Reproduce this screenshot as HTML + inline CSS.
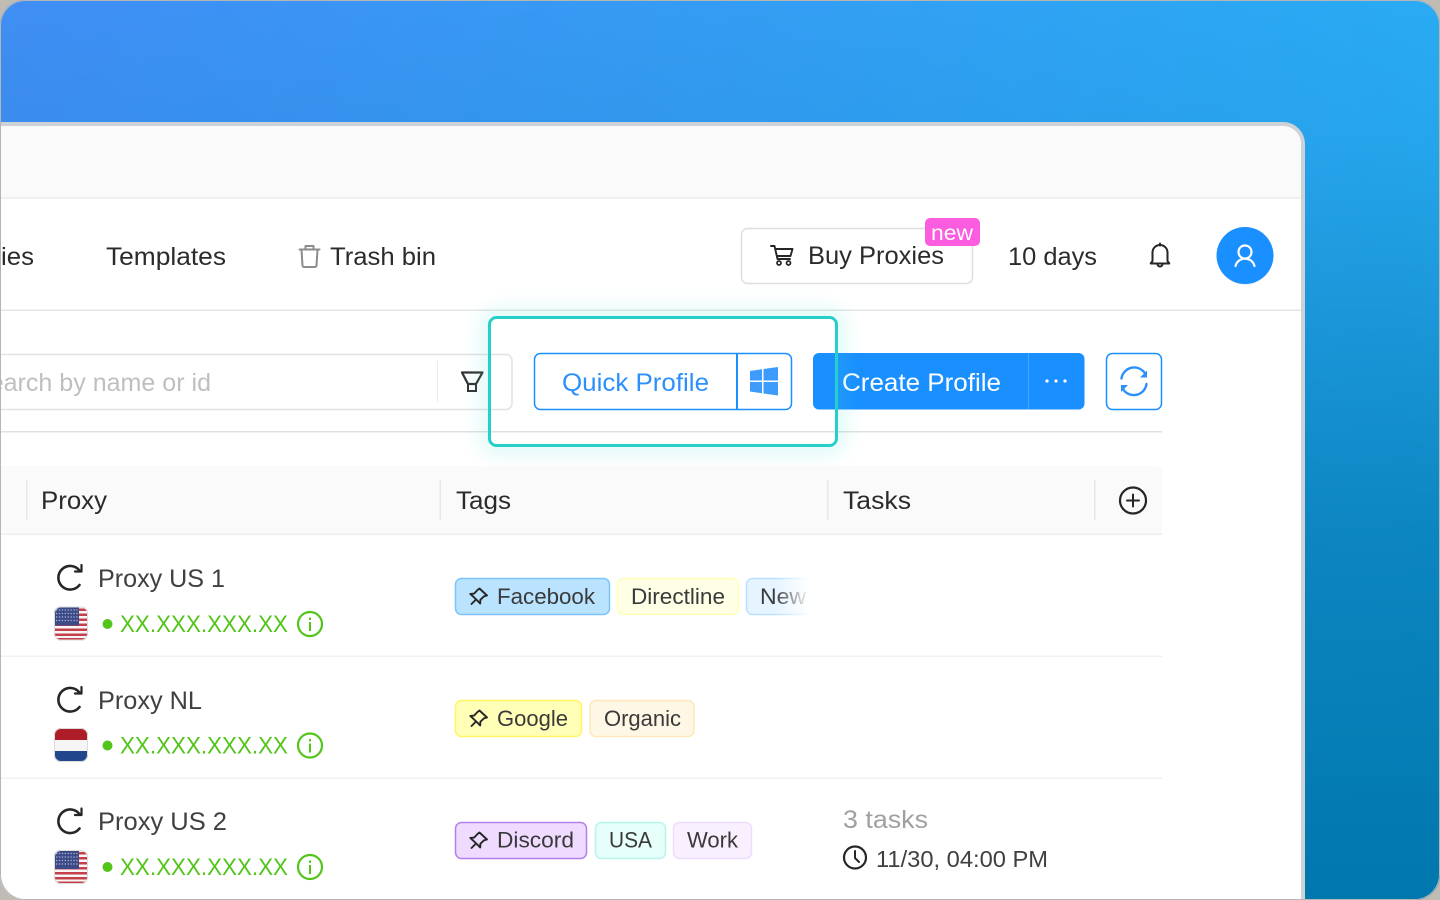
<!DOCTYPE html>
<html lang="en">
<head>
<meta charset="utf-8">
<title>Profiles</title>
<style>
html,body{margin:0;padding:0;background:#fff;width:1440px;height:900px;overflow:hidden}
svg{display:block}
text{font-family:"Liberation Sans",sans-serif;font-size:24px;fill:#2b2b2b}
.tag{font-size:22px;fill:#3a3a3a}
.ico{fill:none;stroke:#262626;stroke-width:2;stroke-linecap:round;stroke-linejoin:round}
.g{fill:#52c41a}
</style>
</head>
<body>
<svg width="1440" height="900" viewBox="0 0 1440 900" xmlns="http://www.w3.org/2000/svg">
<defs>
<linearGradient id="h" x1="0" y1="0" x2="1" y2="0"><stop offset="0" stop-color="#408ef4"/><stop offset="1" stop-color="#29abf3"/></linearGradient>
<linearGradient id="v" x1="0" y1="0" x2="0" y2="1"><stop offset="0" stop-color="#0077ad" stop-opacity="0"/><stop offset=".15" stop-color="#0077ad" stop-opacity=".1"/><stop offset=".6" stop-color="#0077ad" stop-opacity=".72"/><stop offset="1" stop-color="#0077ad"/></linearGradient>
<linearGradient id="fade" x1="0" y1="0" x2="1" y2="0"><stop offset="0" stop-color="#fff" stop-opacity="0"/><stop offset="1" stop-color="#fff"/></linearGradient>
<clipPath id="frame"><rect x="0" y="0" width="1440" height="900" rx="25"/></clipPath>
<clipPath id="outer"><path clip-rule="evenodd" d="M0 0H1440V900H0Z M489 317V446H837V317Z"/></clipPath>
<clipPath id="newclip"><rect x="740" y="570" width="70" height="50"/></clipPath>
<filter id="blur" x="-30%" y="-50%" width="160%" height="200%"><feGaussianBlur stdDeviation="10"/></filter>
<clipPath id="flag"><rect x="54" y="0" width="34" height="34" rx="7"/></clipPath>
<g id="spin"><path class="ico" style="stroke-width:2.600" d="M79.500 570.500A11.800 11.800 0 1 0 79.500 585"/><path class="ico" style="stroke-width:2.200" d="M81.500 565v6.500H75"/></g>
<g id="info"><circle cx="0" cy="0" r="12" fill="none" stroke="#52c41a" stroke-width="2.200"/><rect x="-1" y="-2" width="2" height="9" class="g"/><rect x="-1" y="-6.500" width="2" height="2.400" class="g"/></g>
<g id="pin"><path class="ico" style="stroke-width:1.900" d="M9.500 1.500l7.500 7-3 .8-3.600 3.400-.2 3.800-3.400-3.400-3.700-3.600-2.800-2.600 3.800-.3 3.400-3.600z M1.500 17l4.500-4.500"/></g>
<g id="us">
<g clip-path="url(#flag)">
<rect x="54" y="0" width="34" height="34" fill="#f6f6f6"/>
<rect x="54" y="2" width="34" height="2.500" fill="#c5404b"/><rect x="54" y="7" width="34" height="2.500" fill="#c5404b"/><rect x="54" y="12" width="34" height="2.500" fill="#c5404b"/><rect x="54" y="17" width="34" height="2.500" fill="#c5404b"/><rect x="54" y="22" width="34" height="2.500" fill="#c5404b"/><rect x="54" y="27" width="34" height="2.500" fill="#c5404b"/><rect x="54" y="31.500" width="34" height="2.500" fill="#c5404b"/>
<rect x="54" y="0" width="25" height="19" fill="#3c4a86"/>
<path d="M56 3.500H78M56 7H78M56 10.500H78M56 14H78" stroke="#aab4da" stroke-width="1.200" stroke-dasharray="1.300 1.600"/>
</g>
<rect x="54.500" y=".5" width="33" height="33" rx="6.500" fill="none" stroke="#dcdcdc"/>
</g>
</defs>

<rect width="1440" height="900" fill="#c0bcb4"/>
<g clip-path="url(#frame)">
<rect width="1440" height="900" fill="url(#h)"/>
<rect width="1440" height="900" fill="url(#v)"/>

<!-- window -->
<path d="M-4 122H1283a22 22 0 0 1 22 22V904H-4Z" fill="#cdd1d8"/>
<path d="M-4 126H1283a18 18 0 0 1 18 18V904H-4Z" fill="#fff"/>
<path d="M-4 126H1283a18 18 0 0 1 18 18V197H-4Z" fill="#fafafa"/>
<rect x="0" y="197" width="1301" height="2" fill="#f0f0f0"/>
<rect x="0" y="309.500" width="1301" height="1.500" fill="#e4e4e4"/>

<!-- nav -->
<text x="-52" y="265" textLength="86" lengthAdjust="spacingAndGlyphs" style="font-size:25px">Proxies</text>
<text x="106" y="265" textLength="120" lengthAdjust="spacingAndGlyphs" style="font-size:25px">Templates</text>
<path d="M299.500 249.500h20M305.500 249.500v-3.500h8v3.500M301.500 250l1 15.500a1.500 1.500 0 0 0 1.500 1.500h11a1.500 1.500 0 0 0 1.500-1.500l1-15.500" fill="none" stroke="#8c8c8c" stroke-width="2" stroke-linejoin="round" stroke-linecap="round"/>
<text x="330" y="265" textLength="106" lengthAdjust="spacingAndGlyphs" style="font-size:25px">Trash bin</text>

<rect x="741.500" y="228.500" width="231" height="55" rx="6" fill="#fff" stroke="#dedede" stroke-width="1.500"/>
<path class="ico" d="M771 246h3.500l3 13h12.500M776 249h16.500l-2 7h-13" style="stroke-width:1.900"/>
<circle cx="779" cy="263" r="2" fill="none" stroke="#262626" stroke-width="1.700"/><circle cx="788.500" cy="263" r="2" fill="none" stroke="#262626" stroke-width="1.700"/>
<text x="808" y="264" textLength="136" lengthAdjust="spacingAndGlyphs" style="font-size:25px">Buy Proxies</text>
<rect x="925" y="218" width="55" height="28" rx="5" fill="#fb5ce0"/>
<text x="931" y="240" textLength="42" lengthAdjust="spacingAndGlyphs" style="fill:#fff;font-size:21px">new</text>
<text x="1008" y="265" textLength="89" lengthAdjust="spacingAndGlyphs" style="font-size:25px">10 days</text>
<path class="ico" d="M1160 243.500v2M1160 245a7.500 7.500 0 0 0-7.500 7.500v8.500l-1.800 2.500h18.600l-1.800-2.500v-8.500a7.500 7.500 0 0 0-7.500-7.500zM1157.500 264a2.500 2.500 0 0 0 5 0" style="stroke-width:2"/>
<circle cx="1245" cy="257" r="28" fill="#000" opacity=".06"/>
<circle cx="1245" cy="255.500" r="28.500" fill="#1a8fff"/>
<circle cx="1245" cy="252" r="6.500" fill="none" stroke="#fff" stroke-width="2.200"/>
<path d="M1235.500 266a9.800 9.800 0 0 1 19 0" fill="none" stroke="#fff" stroke-width="2.200" stroke-linecap="round"/>

<!-- toolbar -->
<rect x="-10" y="354.500" width="522" height="55" rx="6" fill="#fff" stroke="#e2e2e2" stroke-width="1.500"/>
<text x="-27" y="391" textLength="238" lengthAdjust="spacingAndGlyphs" style="fill:#bfbfbf;font-size:25px">Search by name or id</text>
<rect x="437" y="361" width="1" height="41" fill="#ececec"/>
<path d="M462 372.500h20.500l-6.500 11.500h-8z" fill="none" stroke="#333" stroke-width="2.200" stroke-linejoin="round"/>
<rect x="468" y="384" width="8" height="7" fill="none" stroke="#333" stroke-width="2"/>
<rect x="0" y="431" width="1162" height="1.500" fill="#e0e0e0"/>

<rect x="534.500" y="353.500" width="257" height="56" rx="6" fill="#fff" stroke="#1a8fff" stroke-width="1.500"/>
<rect x="736" y="353.500" width="2" height="56" fill="#1a8fff"/>
<text x="562" y="391" textLength="147" lengthAdjust="spacingAndGlyphs" style="fill:#2b90fb;font-size:25px">Quick Profile</text>
<path d="M750 371l12-1.700v11.200h-12zM763.500 369l14.500-2v13.500h-14.500zM750 382h12v11.200l-12-1.700zM763.500 382H778v13.500l-14.500-2z" fill="#3d9bfb"/>

<rect x="813" y="353" width="271.500" height="56.500" rx="6" fill="#1a8fff"/>
<rect x="1028" y="353" width="1" height="56.500" fill="#4aa6ff"/>
<text x="842" y="391" textLength="159" lengthAdjust="spacingAndGlyphs" style="fill:#fff;font-size:25px">Create Profile</text>
<circle cx="1047" cy="381" r="1.600" fill="#fff"/><circle cx="1056" cy="381" r="1.600" fill="#fff"/><circle cx="1065" cy="381" r="1.600" fill="#fff"/>

<rect x="1106.500" y="353.500" width="55" height="56" rx="6" fill="#fff" stroke="#1a8fff" stroke-width="1.500"/>
<path d="M1121.500 378.500a12.800 12.800 0 0 1 22.500-6.500l1.500 2M1146.500 384a12.800 12.800 0 0 1-22.500 6.500l-1.500-2" fill="none" stroke="#2b90fb" stroke-width="2.400" stroke-linecap="round"/>
<path d="M1147 370.500v7h-7zM1121 392v-7h7z" fill="#2b90fb"/>

<!-- highlight glow + box -->
<g clip-path="url(#outer)"><rect x="489" y="317" width="348" height="129" rx="7" fill="none" stroke="#3fe0d6" stroke-width="12" opacity=".26" filter="url(#blur)"/></g>
<rect x="489.500" y="317.500" width="347" height="128" rx="7" fill="none" stroke="#26cfcb" stroke-width="3"/>

<!-- table header -->
<path d="M0 466H1156a6 6 0 0 1 6 6V534H0Z" fill="#fafafa"/>
<rect x="0" y="533.500" width="1162" height="1.500" fill="#eeeeee"/>
<rect x="26" y="480" width="1.500" height="40" fill="#e8e8e8"/><rect x="439.500" y="480" width="1.500" height="40" fill="#e8e8e8"/><rect x="827" y="480" width="1.500" height="40" fill="#e8e8e8"/><rect x="1094" y="480" width="1.500" height="40" fill="#e8e8e8"/>
<text x="41" y="509" textLength="66" lengthAdjust="spacingAndGlyphs" style="font-size:25px">Proxy</text>
<text x="456" y="509" textLength="55" lengthAdjust="spacingAndGlyphs" style="font-size:25px">Tags</text>
<text x="843" y="509" textLength="68" lengthAdjust="spacingAndGlyphs" style="font-size:25px">Tasks</text>
<circle cx="1133" cy="500.500" r="13" fill="none" stroke="#262626" stroke-width="2.200"/><path d="M1133 494.500v12M1127 500.500h12" stroke="#262626" stroke-width="2" stroke-linecap="round"/>

<rect x="0" y="655.500" width="1162" height="1.500" fill="#f1f1f1"/>
<rect x="0" y="777.500" width="1162" height="1.500" fill="#f1f1f1"/>

<!-- row 1 -->
<use href="#spin"/>
<text x="98" y="587" textLength="127" lengthAdjust="spacingAndGlyphs" style="fill:#404040;font-size:25px">Proxy US 1</text>
<use href="#us" y="606.500"/>
<circle cx="107.500" cy="624" r="5" class="g"/>
<text x="120" y="632" textLength="168" lengthAdjust="spacingAndGlyphs" style="fill:#52c41a;font-size:24px">XX.XXX.XXX.XX</text>
<use href="#info" x="310" y="624"/>

<rect x="455.500" y="578.500" width="154" height="36" rx="6" fill="#b9e3ff" stroke="#7cc4fb" stroke-width="1.500"/>
<use href="#pin" x="470" y="587"/>
<text class="tag" x="497" y="604" textLength="98" lengthAdjust="spacingAndGlyphs">Facebook</text>
<rect x="617.500" y="578.500" width="121" height="36" rx="6" fill="#ffffe6" stroke="#ffffb8" stroke-width="1.500"/>
<text class="tag" x="631" y="604" textLength="94" lengthAdjust="spacingAndGlyphs">Directline</text>
<g clip-path="url(#newclip)">
<rect x="746.500" y="578.500" width="100" height="36" rx="6" fill="#e6f4ff" stroke="#bae0ff" stroke-width="1.500"/>
<text class="tag" x="760" y="604" textLength="46" lengthAdjust="spacingAndGlyphs">New</text>
</g>
<rect x="775" y="570" width="35" height="50" fill="url(#fade)"/>

<!-- row 2 -->
<use href="#spin" y="122"/>
<text x="98" y="709" textLength="104" lengthAdjust="spacingAndGlyphs" style="fill:#404040;font-size:25px">Proxy NL</text>
<g transform="translate(0 728)">
<g clip-path="url(#flag)"><rect x="54" y="0" width="34" height="12" fill="#ae1c28"/><rect x="54" y="12" width="34" height="11" fill="#f5f5f5"/><rect x="54" y="23" width="34" height="11" fill="#21468b"/></g>
<rect x="54.500" y=".5" width="33" height="33" rx="6.500" fill="none" stroke="#dcdcdc"/>
</g>
<circle cx="107.500" cy="745.500" r="5" class="g"/>
<text x="120" y="753.500" textLength="168" lengthAdjust="spacingAndGlyphs" style="fill:#52c41a;font-size:24px">XX.XXX.XXX.XX</text>
<use href="#info" x="310" y="745.500"/>

<rect x="455.500" y="700.500" width="126" height="36" rx="6" fill="#ffffb8" stroke="#fff566" stroke-width="1.500"/>
<use href="#pin" x="470" y="709"/>
<text class="tag" x="497" y="726" textLength="71" lengthAdjust="spacingAndGlyphs">Google</text>
<rect x="590" y="700.500" width="104" height="36" rx="6" fill="#fff7e6" stroke="#ffe7ba" stroke-width="1.500"/>
<text class="tag" x="604" y="726" textLength="77" lengthAdjust="spacingAndGlyphs">Organic</text>

<!-- row 3 -->
<use href="#spin" y="243.500"/>
<text x="98" y="830" textLength="129" lengthAdjust="spacingAndGlyphs" style="fill:#404040;font-size:25px">Proxy US 2</text>
<use href="#us" y="850"/>
<circle cx="107.500" cy="867" r="5" class="g"/>
<text x="120" y="875" textLength="168" lengthAdjust="spacingAndGlyphs" style="fill:#52c41a;font-size:24px">XX.XXX.XXX.XX</text>
<use href="#info" x="310" y="867"/>

<rect x="455.500" y="822.500" width="131" height="36" rx="6" fill="#efdbff" stroke="#b37feb" stroke-width="1.500"/>
<use href="#pin" x="470" y="831"/>
<text class="tag" x="497" y="847.500" textLength="77" lengthAdjust="spacingAndGlyphs">Discord</text>
<rect x="595.500" y="822.500" width="70" height="36" rx="6" fill="#e6fffb" stroke="#b5f5ec" stroke-width="1.500"/>
<text class="tag" x="609" y="847.500" textLength="43" lengthAdjust="spacingAndGlyphs">USA</text>
<rect x="673.500" y="822.500" width="78" height="36" rx="6" fill="#f9f0ff" stroke="#efdbff" stroke-width="1.500"/>
<text class="tag" x="687" y="847.500" textLength="51" lengthAdjust="spacingAndGlyphs">Work</text>

<text x="843" y="828" textLength="85" lengthAdjust="spacingAndGlyphs" style="fill:#a0a0a0;font-size:25px">3 tasks</text>
<circle cx="855" cy="857.500" r="11" fill="none" stroke="#262626" stroke-width="2.200"/>
<path d="M855 851v7l4 4" fill="none" stroke="#262626" stroke-width="2" stroke-linecap="round" stroke-linejoin="round"/>
<text x="876" y="867" textLength="172" lengthAdjust="spacingAndGlyphs" style="fill:#404040;font-size:23px">11/30, 04:00 PM</text>
</g>
<rect x=".5" y=".5" width="1439" height="899" rx="25" fill="none" stroke="#b5b5b5"/>
</svg>
</body>
</html>
